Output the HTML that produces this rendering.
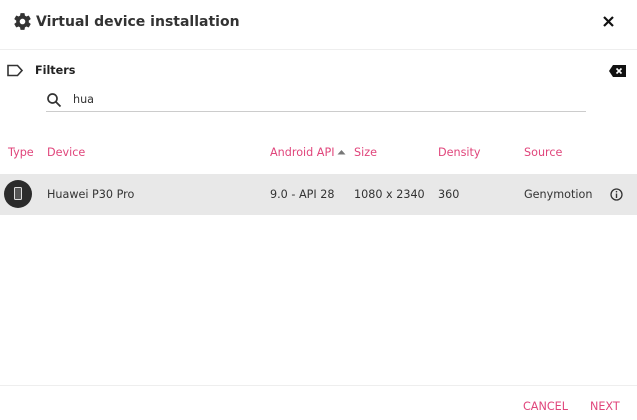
<!DOCTYPE html>
<html><head><meta charset="utf-8"><style>
*{margin:0;padding:0;box-sizing:border-box}
body{width:637px;height:420px;background:#fff;font-family:"DejaVu Sans","Liberation Sans",sans-serif;color:#333;position:relative;overflow:hidden}
.a{position:absolute;white-space:nowrap}
.pk{color:#e0457b;font-size:11.2px}
.t{font-size:11.2px;color:#333}
</style></head><body>
<svg class="a" style="left:12px;top:11px" width="21" height="21" viewBox="0 0 24 24"><path fill="#333" d="M19.14 12.94c.04-.3.06-.61.06-.94 0-.32-.02-.64-.07-.94l2.03-1.58a.49.49 0 0 0 .12-.61l-1.920-3.32a.49.49 0 0 0-.59-.22l-2.39.96c-.5-.38-1.03-.7-1.620-.94l-.36-2.54a.48.48 0 0 0-.48-.41h-3.84c-.24 0-.43.17-.47.41l-.36 2.540c-.59.24-1.13.57-1.62.94l-2.39-.96c-.22-.08-.47 0-.59.22L2.74 8.87c-.12.21-.08.47.12.61l2.03 1.58c-.05.3-.09.63-.09.94s.02.64.07.94l-2.03 1.58a.49.49 0 0 0-.12.61l1.92 3.32c.12.22.37.29.59.22l2.39-.96c.5.38 1.03.7 1.62.94l.36 2.54c.05.24.24.41.48.41h3.84c.24 0 .44-.17.47-.41l.36-2.54c.59-.24 1.13-.56 1.62-.94l2.39.96c.22.08.47 0 .59-.22l1.92-3.32c.12-.22.07-.47-.12-.61l-2.01-1.58zM12 15.2c-1.77 0-3.2-1.43-3.2-3.2s1.43-3.2 3.2-3.2 3.2 1.43 3.2 3.2-1.43 3.2-3.2 3.2z"/></svg>
<div class="a" style="left:36px;top:14px;font-size:14px;font-weight:bold;color:#333">Virtual device installation</div>
<svg class="a" style="left:602px;top:15px" width="13" height="13" viewBox="0 0 13 13"><path d="M2 2L11 11M11 2L2 11" stroke="#111" stroke-width="2.2"/></svg>
<div class="a" style="left:0;top:49px;width:637px;height:1px;background:#eee"></div>
<svg class="a" style="left:6px;top:64px" width="18" height="13" viewBox="0 0 18 13"><path d="M2 1.5H11.5L16 6.5L11.5 11.5H2Z" fill="none" stroke="#333" stroke-width="1.6"/></svg>
<div class="a" style="left:35px;top:64px;font-size:11.2px;font-weight:bold;color:#222">Filters</div>
<svg class="a" style="left:609px;top:65px" width="17" height="12" viewBox="0 0 17 12"><path d="M4 0H17V12H4L0 6Z" fill="#111"/><path d="M7.5 3.5L12.5 8.5M12.5 3.5L7.5 8.5" stroke="#fff" stroke-width="1.6"/></svg>
<svg class="a" style="left:46px;top:92px" width="16" height="16" viewBox="0 0 16 16"><circle cx="6.5" cy="6.5" r="4.5" fill="none" stroke="#333" stroke-width="1.7"/><path d="M10 10L14.5 14.5" stroke="#333" stroke-width="1.8"/></svg>
<div class="a t" style="left:73px;top:93px">hua</div>
<div class="a" style="left:46px;top:111px;width:540px;height:1px;background:#ccc"></div>
<div class="a pk" style="left:8px;top:146px">Type</div>
<div class="a pk" style="left:47px;top:146px">Device</div>
<div class="a pk" style="left:270px;top:146px">Android API</div>
<svg class="a" style="left:337px;top:149px" width="9" height="6"><path d="M0.5 5.5L4.5 1L8.5 5.5Z" fill="#777"/></svg>
<div class="a pk" style="left:354px;top:146px">Size</div>
<div class="a pk" style="left:438px;top:146px">Density</div>
<div class="a pk" style="left:524px;top:146px">Source</div>
<div class="a" style="left:0;top:174px;width:637px;height:41px;background:#e8e8e8"></div>
<div class="a" style="left:4px;top:180px;width:28px;height:28px;border-radius:50%;background:#2b2b2b"></div>
<div class="a" style="left:14px;top:187px;width:8px;height:13px;border:1.5px solid #ddd;border-radius:1.5px;background:#555"></div>
<div class="a t" style="left:47px;top:188px">Huawei P30 Pro</div>
<div class="a t" style="left:270px;top:188px">9.0 - API 28</div>
<div class="a t" style="left:354px;top:188px">1080 x 2340</div>
<div class="a t" style="left:438px;top:188px">360</div>
<div class="a t" style="left:524px;top:188px">Genymotion</div>
<svg class="a" style="left:610px;top:188px" width="13" height="13" viewBox="0 0 13 13"><circle cx="6.5" cy="6.5" r="5.5" fill="none" stroke="#333" stroke-width="1.3"/><path d="M6.5 5.5V10" stroke="#333" stroke-width="1.4"/><circle cx="6.5" cy="3.7" r=".8" fill="#333"/></svg>
<div class="a" style="left:0;top:385px;width:637px;height:1px;background:#eee"></div>
<div class="a pk" style="left:523px;top:400px">CANCEL</div>
<div class="a pk" style="left:590px;top:400px">NEXT</div>
</body></html>
